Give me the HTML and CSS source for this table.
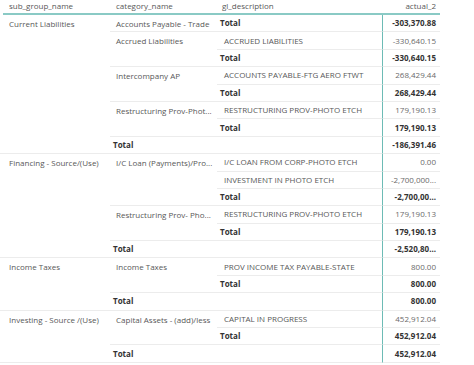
FILE: index.html
```
<!DOCTYPE html>
<html>
<head>
<meta charset="utf-8">
<link rel="stylesheet" href="styles.css">
</head>
<body>
<div class="table">
  <div class="head h1">sub_group_name</div>
  <div class="head">category_name</div>
  <div class="head h3">gl_description</div>
  <div class="head num">actual_2</div>

  <div class="c1 s8 b">Current Liabilities</div>
  <div class="c2 b">Accounts Payable - Trade</div>
  <div class="gl tot b">Total</div>
  <div class="val tot b">-303,370.88</div>

  <div class="c2 s2 b">Accrued Liabilities</div>
  <div class="gl b">ACCRUED LIABILITIES</div>
  <div class="val b">-330,640.15</div>
  <div class="gl tot b">Total</div>
  <div class="val tot b">-330,640.15</div>

  <div class="c2 s2 b">Intercompany AP</div>
  <div class="gl b">ACCOUNTS PAYABLE-FTG AERO FTWT</div>
  <div class="val b">268,429.44</div>
  <div class="gl tot b">Total</div>
  <div class="val tot b">268,429.44</div>

  <div class="c2 s2 b">Restructuring Prov-Phot...</div>
  <div class="gl b">RESTRUCTURING PROV-PHOTO ETCH</div>
  <div class="val b">179,190.13</div>
  <div class="gl tot b">Total</div>
  <div class="val tot b">179,190.13</div>

  <div class="c2 ctot tot w2 b">Total</div>
  <div class="val tot b">-186,391.46</div>

  <div class="c1 s6 b">Financing - Source/(Use)</div>
  <div class="c2 s3 b">I/C Loan (Payments)/Pro...</div>
  <div class="gl b">I/C LOAN FROM CORP-PHOTO ETCH</div>
  <div class="val b">0.00</div>
  <div class="gl b">INVESTMENT IN PHOTO ETCH</div>
  <div class="val b">-2,700,000...</div>
  <div class="gl tot b">Total</div>
  <div class="val tot b">-2,700,00...</div>

  <div class="c2 s2 b">Restructuring Prov- Pho...</div>
  <div class="gl b">RESTRUCTURING PROV-PHOTO ETCH</div>
  <div class="val b">179,190.13</div>
  <div class="gl tot b">Total</div>
  <div class="val tot b">179,190.13</div>

  <div class="c2 ctot tot w2 b">Total</div>
  <div class="val tot b">-2,520,80...</div>

  <div class="c1 s3 b">Income Taxes</div>
  <div class="c2 s2 b">Income Taxes</div>
  <div class="gl b">PROV INCOME TAX PAYABLE-STATE</div>
  <div class="val b">800.00</div>
  <div class="gl tot b">Total</div>
  <div class="val tot b">800.00</div>
  <div class="c2 ctot tot w2 b">Total</div>
  <div class="val tot b">800.00</div>

  <div class="c1 s3 b">Investing - Source /(Use)</div>
  <div class="c2 s2 b">Capital Assets - (add)/less</div>
  <div class="gl b">CAPITAL IN PROGRESS</div>
  <div class="val b">452,912.04</div>
  <div class="gl tot b">Total</div>
  <div class="val tot b">452,912.04</div>
  <div class="c2 ctot tot w2 b">Total</div>
  <div class="val tot b">452,912.04</div>
</div>
</body>
</html>
```
FILE: styles.css
```
html, body {
  margin: 0;
  padding: 0;
  background: #ffffff;
}
.table {
  display: grid;
  width: 440px;
  grid-template-columns: 110px 107px 165px 58px;
  grid-template-rows: 15px;
  grid-auto-rows: 17.4px;
  font-family: "Open Sans", "Noto Sans", sans-serif;
  font-size: 8px;
  color: #585858;
  line-height: 1;
}
.table > div {
  display: flex;
  align-items: center;
  white-space: nowrap;
  overflow: hidden;
  box-sizing: border-box;
}
.head {
  border-bottom: 2px solid #8acac5;
  padding-left: 6px;
  padding-bottom: 1px;
}
.head.h1 { margin-left: 3px; padding-left: 6px; }
.head.h3 { padding-left: 5px; }
.head.num {
  justify-content: flex-end;
  padding-right: 4px;
}
.c1 {
  align-items: flex-start !important;
  padding-left: 9px;
  padding-top: 5px;
}
.c2 {
  align-items: flex-start !important;
  padding-left: 6px;
  padding-top: 5px;
}
.c2.ctot {
  align-items: center !important;
  padding-top: 0;
  padding-left: 3px;
}
.gl { padding-left: 7px; }
.gl.tot { padding-left: 3px; }
.val {
  justify-content: flex-end;
  padding-right: 4px;
  border-left: 1px solid #6dbbb5;
  color: #6a6a6a;
}
.tot {
  font-weight: 700;
  color: #333333;
}
.b { border-bottom: 1px solid #ececec; }
.s2 { grid-row: span 2; }
.s3 { grid-row: span 3; }
.s6 { grid-row: span 6; }
.s8 { grid-row: span 8; }
.w2 { grid-column: span 2; }
```
